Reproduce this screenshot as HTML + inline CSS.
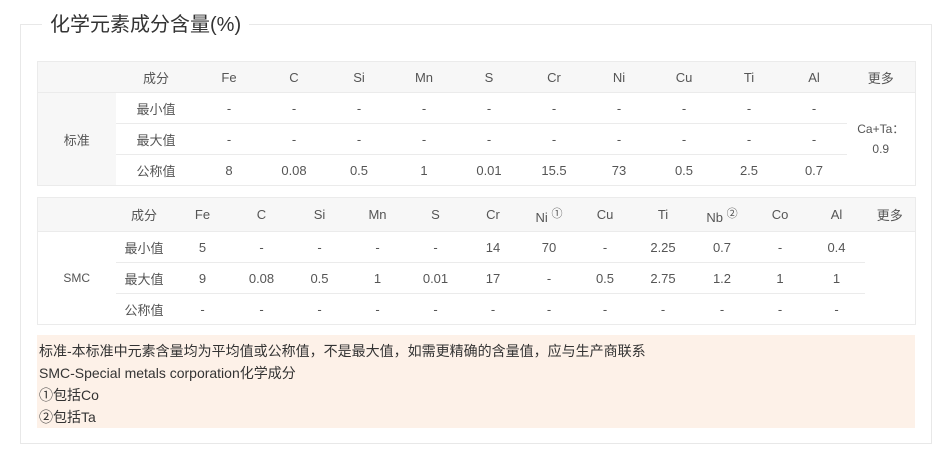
<!DOCTYPE html>
<html><head><meta charset="utf-8"><style>
*{margin:0;padding:0;box-sizing:border-box}
body{width:949px;height:460px;background:#fff;font-family:"Liberation Sans","Noto Sans CJK SC",sans-serif;color:#555;position:relative;overflow:hidden}
.fs{position:absolute;left:20px;top:24px;width:912px;height:420px;border:1px solid #e8e8e8}
.lg{position:absolute;left:42px;top:12px;background:#fff;padding:0 8px;font-size:20px;color:#333;line-height:26px}
table{position:absolute;left:37px;width:878px;border-collapse:collapse;table-layout:fixed;font-size:13px;text-align:center;border:1px solid #ebebeb}
td{height:31px;padding:0;vertical-align:middle}
.h td{background:#f7f7f7;border-bottom:1px solid #ebebeb}
.g{background:#f7f7f7}
.b td.m{border-top:1px solid #ebebeb}
sup{font-size:11px;vertical-align:5px}
.note{position:absolute;left:37px;top:335px;width:878px;height:93px;background:#fdf1e8;font-size:14px;color:#333;padding:5px 0 0 2px;line-height:22px}
</style></head><body>
<div class="fs"></div>
<div class="lg">化学元素成分含量(%)</div>
<table style="top:61px">
<colgroup><col style="width:78px"><col style="width:81px"><col span="10" style="width:65px"><col style="width:69px"></colgroup>
<tr class="h"><td></td><td>成分</td><td>Fe</td><td>C</td><td>Si</td><td>Mn</td><td>S</td><td>Cr</td><td>Ni</td><td>Cu</td><td>Ti</td><td>Al</td><td>更多</td></tr>
<tr class="b"><td rowspan="3" class="g">标准</td><td class="m">最小值</td><td class="m">-</td><td class="m">-</td><td class="m">-</td><td class="m">-</td><td class="m">-</td><td class="m">-</td><td class="m">-</td><td class="m">-</td><td class="m">-</td><td class="m">-</td><td rowspan="3" style="font-size:12px;line-height:20px">Ca+Ta：<br>0.9</td></tr>
<tr class="b"><td class="m">最大值</td><td class="m">-</td><td class="m">-</td><td class="m">-</td><td class="m">-</td><td class="m">-</td><td class="m">-</td><td class="m">-</td><td class="m">-</td><td class="m">-</td><td class="m">-</td></tr>
<tr class="b"><td class="m">公称值</td><td class="m">8</td><td class="m">0.08</td><td class="m">0.5</td><td class="m">1</td><td class="m">0.01</td><td class="m">15.5</td><td class="m">73</td><td class="m">0.5</td><td class="m">2.5</td><td class="m">0.7</td></tr>
</table>
<table style="top:197px">
<colgroup><col style="width:78px"><col style="width:57px"><col style="width:60px"><col style="width:58px"><col style="width:58px"><col style="width:58px"><col style="width:58px"><col style="width:57px"><col style="width:55px"><col style="width:57px"><col style="width:59px"><col style="width:59px"><col style="width:57px"><col style="width:56px"><col style="width:51px"></colgroup>
<tr class="h"><td style="height:34px"></td><td>成分</td><td>Fe</td><td>C</td><td>Si</td><td>Mn</td><td>S</td><td>Cr</td><td>Ni <sup>①</sup></td><td>Cu</td><td>Ti</td><td>Nb <sup>②</sup></td><td>Co</td><td>Al</td><td>更多</td></tr>
<tr class="b"><td rowspan="3" style="font-size:12px">SMC</td><td class="m">最小值</td><td class="m">5</td><td class="m">-</td><td class="m">-</td><td class="m">-</td><td class="m">-</td><td class="m">14</td><td class="m">70</td><td class="m">-</td><td class="m">2.25</td><td class="m">0.7</td><td class="m">-</td><td class="m">0.4</td><td rowspan="3"></td></tr>
<tr class="b"><td class="m">最大值</td><td class="m">9</td><td class="m">0.08</td><td class="m">0.5</td><td class="m">1</td><td class="m">0.01</td><td class="m">17</td><td class="m">-</td><td class="m">0.5</td><td class="m">2.75</td><td class="m">1.2</td><td class="m">1</td><td class="m">1</td></tr>
<tr class="b"><td class="m">公称值</td><td class="m">-</td><td class="m">-</td><td class="m">-</td><td class="m">-</td><td class="m">-</td><td class="m">-</td><td class="m">-</td><td class="m">-</td><td class="m">-</td><td class="m">-</td><td class="m">-</td><td class="m">-</td></tr>
</table>
<div class="note">标准-本标准中元素含量均为平均值或公称值，不是最大值，如需更精确的含量值，应与生产商联系<br>SMC-Special metals corporation化学成分<br>①包括Co<br>②包括Ta</div>
</body></html>
